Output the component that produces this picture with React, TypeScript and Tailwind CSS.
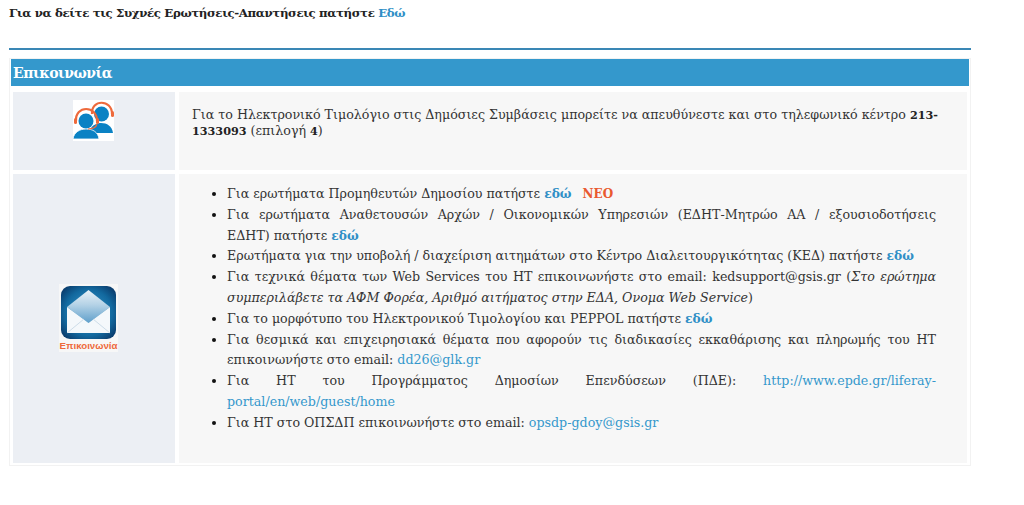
import React from 'react';

const linkCls = 'text-[#3498cc]';
const boldLink = 'text-[#2f8fc6] font-bold text-[12.3px]';

const AgentsIcon = () => (
  <svg width="41" height="41" viewBox="0 0 41 41" className="bg-white">
    {/* back person */}
    <circle cx="28.5" cy="14" r="7.5" fill="#0a82c4" />
    <path d="M17 30 C19 25 24 23 28 23 C34 23 39 26 40 33 L22 33 Z" fill="#0a82c4" />
    <path d="M19 14 C18 -1 39 -1 39 14" fill="none" stroke="#ee6a3c" strokeWidth="2.2" />
    <rect x="38" y="11" width="3" height="6" rx="1.5" fill="#ee6a3c" />
    {/* front person */}
    <path d="M0 39 C1 32 7 29 13 29 C20 29 25 32 26 39 Z" fill="#0a82c4" stroke="#fff" strokeWidth="0.8" />
    <circle cx="13" cy="21" r="7.5" fill="#0a82c4" />
    <path d="M3 21 C2 5 24 5 24 21" fill="none" stroke="#ee6a3c" strokeWidth="2.2" />
    <rect x="1" y="18" width="3" height="6" rx="1.5" fill="#ee6a3c" />
    <rect x="23" y="18" width="3" height="6" rx="1.5" fill="#ee6a3c" />
    <path d="M24 24 C23 28 19 29 15 29" fill="none" stroke="#ee6a3c" strokeWidth="1.2" />
  </svg>
);

const MailIcon = () => (
  <div className="flex flex-col items-center bg-[#f7f7f7] w-[59px] h-[68px]">
    <svg width="55" height="53" viewBox="0 0 55 53" className="mt-[2px]">
      <defs>
        <radialGradient id="tile" cx="50%" cy="50%" r="62%">
          <stop offset="0%" stopColor="#3c9ccf" />
          <stop offset="70%" stopColor="#12699f" />
          <stop offset="100%" stopColor="#0b3f70" />
        </radialGradient>
        <linearGradient id="flap" x1="0" y1="0" x2="0" y2="1">
          <stop offset="0%" stopColor="#e8f1f7" />
          <stop offset="45%" stopColor="#b4d2e6" />
          <stop offset="100%" stopColor="#5f9fcb" />
        </linearGradient>
      </defs>
      <rect x="0" y="0" width="55" height="53" rx="9" fill="url(#tile)" />
      <path d="M6 21 L27.5 4 L49 21 L27.5 37 Z" fill="url(#flap)" />
      <path d="M6 21 L27.5 37 L49 21 L49 47 L6 47 Z" fill="#f4f8fb" />
      <path d="M6 47 L23 33 M49 47 L32 33" stroke="#cddde9" strokeWidth="1" />
    </svg>
    <span className="mt-[1px] text-[9.7px] leading-[12px] font-bold text-[#ee6a3c] font-['Liberation_Sans',sans-serif]">Επικοινωνία</span>
  </div>
);

const App: React.FC = () => {
  return (
    <div className="w-[1024px] h-[505px] overflow-hidden bg-white font-['DejaVu_Serif',serif] text-[12.65px] leading-[20.8px] text-[#333]">
      <p className="pl-[9px] pt-[3px] h-[48px] font-bold text-[#222] text-[11.8px] tracking-[-0.38px]">
        Για να δείτε τις Συχνές Ερωτήσεις-Απαντήσεις πατήστε <a className="text-[#2f8fc6]">Εδώ</a>
      </p>
      <div className="ml-[9px] w-[962px] h-[2px] bg-[#3a87b5]" />
      <div className="ml-[9px] mt-[8px] w-[962px] border border-[#f2f2f2] px-[1px]">
        <h2 className="h-[27px] bg-[#3498cc] px-[2px] text-[14px] tracking-[-0.5px] leading-[29px] font-bold text-white">Επικοινωνία</h2>
        <div className="grid grid-cols-[162px_788px] gap-[4px] px-[2px] pt-[6px] pb-[2px]">
          <div className="h-[78px] bg-[#eceff4] flex justify-center pt-[8px] pr-[1px]">
            <AgentsIcon />
          </div>
          <div className="h-[78px] bg-[#f7f7f7] pl-[13px] pr-[24px] pt-[15px] leading-[16px]">
            Για το Ηλεκτρονικό Τιμολόγιο στις Δημόσιες Συμβάσεις μπορείτε να απευθύνεστε και στο τηλεφωνικό κέντρο <b className="text-[#222] text-[11.2px]">213-1333093</b> (επιλογή <b className="text-[#222] text-[11.2px]">4</b>)
          </div>
          <div className="h-[289px] bg-[#eceff4] flex justify-center items-center pb-[1px] pr-[11px]">
            <MailIcon />
          </div>
          <div className="h-[289px] bg-[#f7f7f7] pl-[48px] pr-[31px] pt-[10px]">
            <ul className="list-disc text-justify text-[#333] marker:text-[#111]">
              <li>Για ερωτήματα Προμηθευτών Δημοσίου πατήστε <a className={boldLink}>εδώ</a> <b className="ml-[7px] text-[12px] text-[#e9592f]">ΝΕΟ</b></li>
              <li>Για ερωτήματα Αναθετουσών Αρχών / Οικονομικών Υπηρεσιών (ΕΔΗΤ-Μητρώο ΑΑ / εξουσιοδοτήσεις ΕΔΗΤ)&nbsp;πατήστε <a className={boldLink}>εδώ</a></li>
              <li>Ερωτήματα για την υποβολή / διαχείριση αιτημάτων στο Κέντρο Διαλειτουργικότητας (ΚΕΔ) πατήστε <a className={boldLink}>εδώ</a></li>
              <li>Για τεχνικά θέματα των Web Services του ΗΤ επικοινωνήστε στο email: kedsupport@gsis.gr (<i>Στο ερώτημα συμπεριλάβετε τα ΑΦΜ Φορέα, Αριθμό αιτήματος στην ΕΔΑ, Ονομα Web Service</i>)</li>
              <li>Για το μορφότυπο του Ηλεκτρονικού Τιμολογίου και PEPPOL πατήστε <a className={boldLink}>εδώ</a></li>
              <li>Για θεσμικά και επιχειρησιακά θέματα που αφορούν τις διαδικασίες εκκαθάρισης και πληρωμής του ΗΤ επικοινωνήστε στο email: <a className={linkCls}>dd26@glk.gr</a></li>
              <li>Για ΗΤ του Προγράμματος Δημοσίων Επενδύσεων (ΠΔΕ): <a className={linkCls}>http://www.epde.gr/liferay-portal/en/web/guest/home</a></li>
              <li>Για ΗΤ στο ΟΠΣΔΠ επικοινωνήστε στο email: <a className={linkCls}>opsdp-gdoy@gsis.gr</a></li>
            </ul>
          </div>
        </div>
      </div>
    </div>
  );
};

export default App;
